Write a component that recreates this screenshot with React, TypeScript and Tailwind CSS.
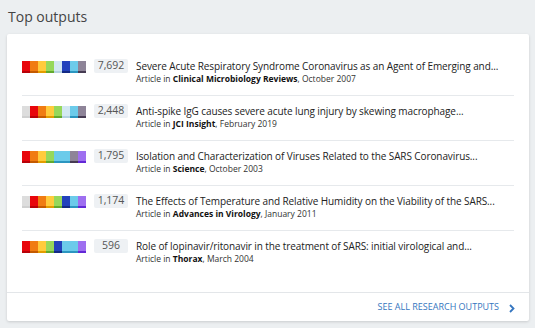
const SEG: Record<string, string> = {
  r: 'bg-[#e8060c] border-[#b80008]',
  o: 'bg-[#f07c12] border-[#c45a00]',
  y: 'bg-[#ffcb3c] border-[#e39d00]',
  g: 'bg-[#96d85a] border-[#62a92e]',
  p: 'bg-[#d3e8f2] border-[#b4d2e2]',
  d: 'bg-[#2242bc] border-[#132a84]',
  l: 'bg-[#6ccbea] border-[#2b96c0]',
  m: 'bg-[#8e8498] border-[#463b52]',
  v: 'bg-[#9e6ff0] border-[#6228d6]',
  x: 'bg-[#dddddd] border-[#d0d0d0]',
};

const outputs = [
  {
    bar: 'roygpdlm',
    score: '7,692',
    title: 'Severe Acute Respiratory Syndrome Coronavirus as an Agent of Emerging and...',
    journal: 'Clinical Microbiology Reviews',
    date: 'October 2007',
  },
  {
    bar: 'xroygplm',
    score: '2,448',
    title: 'Anti-spike IgG causes severe acute lung injury by skewing macrophage...',
    journal: 'JCI Insight',
    date: 'February 2019',
  },
  {
    bar: 'roygllmv',
    score: '1,795',
    title: 'Isolation and Characterization of Viruses Related to the SARS Coronavirus...',
    journal: 'Science',
    date: 'October 2003',
  },
  {
    bar: 'xroygdlv',
    score: '1,174',
    title: 'The Effects of Temperature and Relative Humidity on the Viability of the SARS...',
    journal: 'Advances in Virology',
    date: 'January 2011',
  },
  {
    bar: 'roygdllv',
    score: '596',
    title: 'Role of lopinavir/ritonavir in the treatment of SARS: initial virological and...',
    journal: 'Thorax',
    date: 'March 2004',
  },
];

function Bar({ code }: { code: string }) {
  return (
    <div className="flex h-[12px] w-[64px] shrink-0">
      {code.split('').map((c, i) => (
        <div key={i} className={`h-full w-[8px] border-b-[2px] ${SEG[c]}`} />
      ))}
    </div>
  );
}

export default function App() {
  return (
    <div className="h-[328px] w-[535px] bg-[#eceff1] px-[7px] pt-[6px] font-['Open_Sans',sans-serif] text-[#333]">
      <h2 className="ml-[1px] text-[14px] leading-[22px] text-[#444]">Top outputs</h2>
      <div className="mt-[6px] w-[522px] rounded-[2px] bg-white shadow-[0_1px_3px_rgba(0,0,0,0.15)]">
        <ul className="px-[15px] pb-[17px] pt-[17px]">
          {outputs.map((o, i) => (
            <li
              key={i}
              className={`flex items-start pb-[10px] pt-[9px] ${
                i < outputs.length - 1 ? 'border-b border-[#e6e9ec]' : ''
              }`}
            >
              <div className="mt-[1px]">
                <Bar code={o.bar} />
              </div>
              <span className="ml-[8px] mt-[-1px] flex h-[14px] w-[34px] shrink-0 items-center justify-center rounded-[2px] bg-[#eef1f4] text-[10.5px] text-[#555]">
                {o.score}
              </span>
              <div className="ml-[8px] min-w-0 flex-1">
                <div className="whitespace-nowrap text-[10px] leading-[13px] tracking-[-0.1px] text-[#222]">
                  {o.title}
                </div>
                <div className="text-[8.5px] leading-[12px] text-[#333]">
                  Article in <b className="font-bold text-[#111]">{o.journal}</b>, {o.date}
                </div>
              </div>
            </li>
          ))}
        </ul>
        <div className="flex h-[29px] items-center justify-end border-t border-[#e3e6e9] pr-[14px]">
          <span className="text-[9px] uppercase text-[#3576c0]">See all research outputs</span>
          <svg width="6" height="9" viewBox="0 0 6 9" className="ml-[10px] mt-[2px]">
            <path d="M1 1l3.5 3.5L1 8" fill="none" stroke="#3576c0" strokeWidth="1.8" />
          </svg>
        </div>
      </div>
    </div>
  );
}
